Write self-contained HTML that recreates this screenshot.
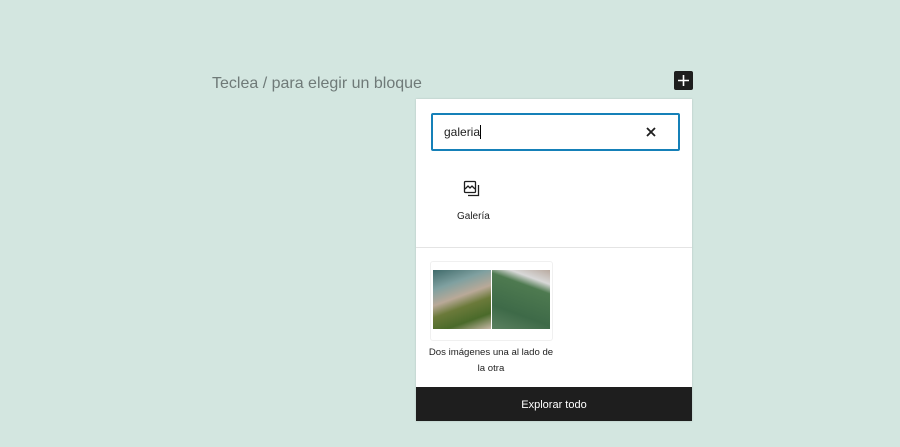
<!DOCTYPE html>
<html><head><meta charset="utf-8"><style>
body{margin:0;width:900px;height:447px;background:#d3e6e0;font-family:"Liberation Sans",sans-serif;position:relative;overflow:hidden}
.ph{position:absolute;left:212px;top:75px;font-size:16px;color:#6f7a78}
.plus{position:absolute;left:674px;top:71px;width:19px;height:19px;background:#1e1e1e;border-radius:2px;color:#fff}
.panel{position:absolute;left:416px;top:99px;width:276px;height:322px;background:#fff;box-shadow:0 0 2px rgba(0,0,0,.15)}
.search{position:absolute;left:15px;top:14px;width:245px;height:34px;border:2px solid #1580b8;border-radius:2px}
.search span{position:absolute;left:11px;top:10px;font-size:12px;color:#1e1e1e}
.cur{display:inline-block;width:1px;height:14px;background:#000;vertical-align:-3px}
.lbl{position:absolute;left:41px;top:112px;font-size:10px;color:#1e1e1e}
.div{position:absolute;left:0;top:148px;width:276px;height:1px;background:#e4e4e4}
.card{position:absolute;left:14px;top:162px;width:121px;height:78px;border:1px solid #f0f0f0;border-radius:3px}
.img{position:absolute;left:2px;top:8px;width:117px;height:59px;display:flex}
.cap{position:absolute;left:12px;top:246px;width:126px;text-align:center;font-size:9.6px;line-height:16px;color:#1e1e1e}
.bar{position:absolute;left:0;bottom:0;width:276px;height:34px;background:#1e1e1e;color:#fff;font-size:11px;text-align:center;line-height:36px}
</style></head><body>
<div class="ph">Teclea / para elegir un bloque</div>
<div class="plus"><svg width="19" height="19"><path d="M9.5 4v11M4 9.5h11" stroke="#fff" stroke-width="1.6"/></svg></div>
<div class="panel">
<div class="search"><span>galeria<i class="cur"></i></span>
<svg style="position:absolute;left:213px;top:12px" width="10" height="10"><path d="M1 1l8 8M9 1l-8 8" stroke="#1e1e1e" stroke-width="1.8"/></svg></div>
<svg style="position:absolute;left:47px;top:81px" width="18" height="18" viewBox="0 0 18 18" fill="none" stroke="#1e1e1e" stroke-width="1.3"><rect x="1.5" y="1.5" width="11" height="11" rx="1"/><path d="M2 9l3-3 2 2 2-2 3 3"/><path d="M15.5 5v10.5H5"/></svg>
<div class="lbl">Galería</div>
<div class="div"></div>
<div class="card"><div class="img">
<div style="width:58px;background:linear-gradient(160deg,#3f6a6a 0%,#7fa0a0 25%,#b9a998 45%,#6b7a3a 60%,#4a6a2a 80%,#c7b8a8 100%)"></div>
<div style="width:1px;background:#fff"></div>
<div style="flex:1;background:linear-gradient(200deg,#b9aaa0 0%,#d8d8d8 18%,#4e7a50 30%,#3e6a48 70%,#5b8060 100%)"></div>
</div></div>
<div class="cap">Dos imágenes una al lado de la otra</div>
<div class="bar">Explorar todo</div>
</div>
</body></html>
